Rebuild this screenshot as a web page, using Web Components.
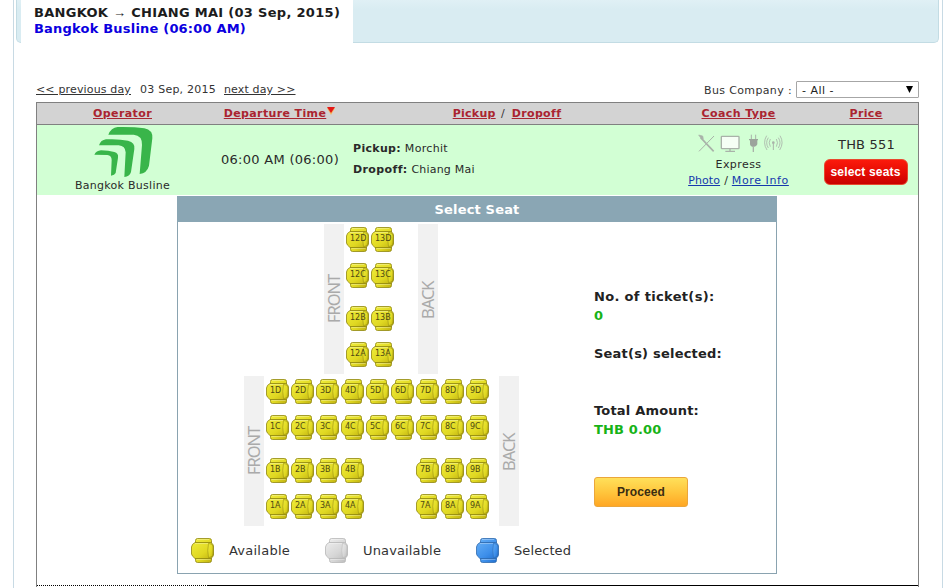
<!DOCTYPE html>
<html lang="en">
<head>
<meta charset="utf-8">
<title>Select Seat</title>
<style>
html,body{margin:0;background:#fff;overflow:hidden}
body{width:948px;height:588px;font:11px/14px "DejaVu Sans",sans-serif;color:#2a2a2a}
</style>
</head>
<body>
<booking-page></booking-page>
<script>
const define = (name, html, setup) => customElements.define(name, class extends HTMLElement {
  connectedCallback() {
    if (this.shadowRoot) return;
    const root = this.attachShadow({ mode: 'open' });
    root.innerHTML = typeof html === 'function' ? html(this) : html;
    if (setup) setup(this, root);
  }
});

// Text tracked to an exact advance width
const ctx = document.createElement('canvas').getContext('2d');
define('fit-text', '<style>:host{display:inline-block;white-space:pre}</style><slot></slot>', el => {
  const s = getComputedStyle(el);
  ctx.font = `${s.fontWeight} ${s.fontSize} ${s.fontFamily}`;
  const t = el.textContent, w = +el.getAttribute('w');
  el.style.letterSpacing = ((w - ctx.measureText(t).width) / t.length).toFixed(3) + 'px';
});

const tones = {
  available: ['#efec3a', '#e0d822', '#bfb110', '#8f860f'],
  unavailable: ['#ececec', '#d6d6d6', '#bdbdbd', '#b8b8b8'],
  selected: ['#62acf5', '#3d8fea', '#216fce', '#2f69ad']
};
define('bus-seat', el => {
  const [a, b, c, d] = tones[el.getAttribute('state') || 'available'];
  return `<style>
  :host{display:block;position:relative;width:24px;height:26px}
  svg{display:block}
  span{position:absolute;left:4px;top:7px;font:8px/9px "DejaVu Sans",sans-serif;color:#4d4913;white-space:nowrap}
  </style>
  <svg width="23" height="25" viewBox="0 0 23 25">
  <defs><linearGradient id="g" x1="0" y1="0" x2="1" y2="1"><stop offset="0" stop-color="${a}"/><stop offset=".6" stop-color="${b}"/><stop offset="1" stop-color="${c}"/></linearGradient></defs>
  <g stroke="${d}" stroke-width=".8" fill="url(#g)">
  <path d="M4.500 5V2.500q0-2 2-2h12q2 0 2 2V5zM4.500 20v2.500q0 2 2 2h12q2 0 2-2V20z"/>
  <path d="M4 4.500h15.500q2.800 1 3 3.500v9q-.5 2.500-3 3.500H4Q.8 18 .5 16V9Q.8 6 4 4.500z"/>
  <path d="M17.500 5.500q-1.500 7 0 14l2.500-.5q2-1 2-3.500v-6.500q0-2.500-2-3z" stroke-opacity=".65"/>
  </g><path d="M4 5.500h13M6 1.500h12M5.500 21.500h14" stroke="#fff" stroke-opacity=".3"/></svg>
  <span><slot></slot></span>`;
});

define('deck-edge', `<style>
:host{display:flex;width:20px;height:150px;box-sizing:border-box;padding-bottom:2px;background:#f1f1f1;align-items:center;justify-content:center;
writing-mode:vertical-rl;transform:rotate(180deg);font:16.5px/20px "Noto Sans",sans-serif;color:#aaa}
</style><slot></slot>`);

// A deck is a grid of seats between its front and back edges
define('seat-deck', el => {
  const cols = el.getAttribute('cols').split(' ').map(Number);
  const skip = (el.getAttribute('aisle') || '').split(' ').map(Number);
  let seats = '';
  ['D', 'C', 'B', 'A'].forEach((r, i) => cols.forEach((n, j) => {
    if (i > 1 && skip.includes(n)) return;
    seats += `<bus-seat style="grid-area:${i + 1}/${j + 1}">${n}${r}</bus-seat>`;
  }));
  return `<style>:host{display:flex;height:150px}
  .s{display:grid;grid-template-columns:repeat(${cols.length},25px);grid-template-rows:36px 43px 36px 26px;padding:3px 0 0 2px;box-sizing:border-box;width:${el.getAttribute('body')}px}
  </style><deck-edge style="padding-bottom:0;padding-top:0"><fit-text w="48">FRONT</fit-text></deck-edge><div class="s">${seats}</div><deck-edge><fit-text w="37.5">BACK</fit-text></deck-edge>`;
});

define('operator-logo', `<style>:host{display:block;width:60px;height:52px}svg{display:block}</style>
<svg width="60" height="52" viewBox="188 153 180 156" fill="#39b54a">
<path d="M234 179Q242 158 262 156Q310 155 342 160Q368 165 366 190L356 272Q350 294 328 297L335 210Q336 181 310 179Z"/>
<path d="M206 211Q211 195 227 193Q265 191 293 197Q315 202 312 222L302 291Q298 304 282 306L286 232Q285 213 265 211Z"/>
<path d="M192 239Q198 227 212 226Q235 226 252 231Q265 234 263 248L256 294Q253 301 242 302L244 255Q244 242 231 240Z"/>
</svg>`);

define('coach-amenities', `<style>:host{display:block;width:88px;height:20px}svg{display:block}</style>
<svg width="88" height="20" viewBox="163 174 264 60" fill="none" stroke="#a9b2a9" stroke-width="4">
<path d="M180 188L219 229" stroke-width="5"/><path d="M220 183L175 229" stroke-width="3"/><path d="M174 180l7 10l7 1l-2-8z" fill="#a9b2a9" stroke-width="2"/>
<rect x="242" y="184" width="53" height="37" rx="2" fill="#f5fff5" stroke-width="4"/><path d="M254 229h29M268 221v7" stroke-width="4"/>
<path d="M332 179v13M345 179v13" stroke-width="3"/><path d="M325 192h27v4h-2v12q-3 8-11 8q-9 0-11-8v-12h-3z" fill="#9ca49c" stroke="none"/><path d="M338 213v18"/>
<circle cx="398" cy="203" r="4" fill="#a9b2a9" stroke="none"/><path d="M398 207v18" stroke-width="3"/>
<path d="M389 192q-7 11 0 23M407 192q7 11 0 23M383 188q-10 15 0 31M413 188q10 15 0 31M378 182q-13 21 1 43M418 182q13 21-1 43" stroke-width="2.500"/>
</svg>`);

define('route-header', `<style>
:host{display:flex;height:43px;margin:0 3px 0 2px;box-sizing:border-box;border:1px solid #c3dce4;border-top:0;border-radius:0 0 5px 5px;background:linear-gradient(#e0f0f5,#d9ecf2 9px);padding-left:4px}
.tab{width:332px;height:43px;box-sizing:border-box;background:#fff;padding:5px 0 0 13px;font:bold 13px/16px "DejaVu Sans",sans-serif;color:#1c1c1c}
.tab fit-text{display:block}.b{color:#0b00df}.a{font-family:"Liberation Sans",sans-serif;font-weight:normal;line-height:1}
</style><div class="tab"><fit-text w="304">BANGKOK <span class="a">→</span> CHIANG MAI (03 Sep, 2015)</fit-text><fit-text class="b" w="212">Bangkok Busline (06:00 AM)</fit-text></div>`);

define('day-nav', `<style>
:host{display:flex;height:21px;padding:38px 23px 0 22px;color:#333}
.u{text-decoration:underline;text-underline-offset:1px}
fit-text{margin-top:2px}.d{margin-left:9px}.n{margin-left:8px}.c{margin:3px 4px 0 auto}
.sel{display:flex;justify-content:space-between;box-sizing:border-box;width:123px;height:17px;border:1px solid #a6a6a6;border-radius:1px;padding:1px 5px 0 5px;color:#222}
.sel fit-text{margin:1px 0 0}svg{margin-top:3px}
</style><fit-text class="u" w="95">&lt;&lt; previous day</fit-text><fit-text class="d" w="76">03 Sep, 2015</fit-text><fit-text class="n u" w="71.5">next day &gt;&gt;</fit-text>
<fit-text class="c" w="88">Bus Company :</fit-text><div class="sel"><fit-text w="32">- All -</fit-text><svg width="7" height="7"><path d="M0 0h7L3.500 7z" fill="#000"/></svg></div>`);

define('trip-table', `<style>
:host{display:block;margin:0 23px 0 22px;border:1px solid #808080;border-bottom:0;height:485px;box-sizing:border-box}
.h,.r{display:grid;grid-template-columns:170px 144px 312px 150px 105px}
.h{height:21px;background:#d3d3d3;border-bottom:1px solid #808080;font-weight:bold;color:#aa2430;text-align:center}
.h>div{padding:4px 0 0 1px}
u{text-decoration:none}u fit-text{text-decoration:underline 1px;text-underline-offset:1px}
.h .dep{display:flex;justify-content:center;gap:1px}
.h i{font-weight:normal;font-style:normal;color:#333}
.r{height:70px;background:#d2ffd4}
.r>div{display:flex;flex-direction:column;align-items:center}
.r .op{padding:1px 0 0 1px}.op fit-text{line-height:14px;margin-top:1px}
.r .time{font-size:13px;line-height:16px;padding:27px 0 0 2px}
.r>.pick{align-items:flex-start;padding:13px 0 0 2px;line-height:21px}
.r .coach{padding:8px 0 0 1px}.coach .e{margin-top:5px;line-height:14px}.coach .l{display:flex;gap:4px;margin-top:2px}
.l u{color:#1539ad}
.price{font-size:13px;line-height:16px;padding-top:12px}.price>fit-text{margin-left:2px}
.buy{width:84px;height:26px;box-sizing:border-box;border:1px solid #e8482e;border-radius:6px;background:linear-gradient(#fb1a0c,#e40b03 55%,#c90000);margin-top:6px;text-align:center;font:bold 12px/24px "Liberation Sans",sans-serif;color:#fff}
.panel{margin:1px auto 0 140px}
.line{height:1px;margin-top:11px;display:flex}.line b{width:171px;background:repeating-linear-gradient(90deg,#000 0 1px,#fff 1px 2px)}.line i{flex:1;background:#000}
</style>
<div class="h"><div><u><fit-text w="59">Operator</fit-text></u></div>
<div class="dep"><u><fit-text w="102.5">Departure Time</fit-text></u><svg width="8" height="8"><path d="M0 1h8L4 8z" fill="#f7b65b"/><path d="M0 0h8L4 6z" fill="#e31818"/></svg></div>
<div style="padding-left:0"><u><fit-text w="43">Pickup</fit-text></u><i><fit-text w="16"> / </fit-text></i><u><fit-text w="49">Dropoff</fit-text></u></div>
<div><u><fit-text w="74">Coach Type</fit-text></u></div><div><u><fit-text w="33">Price</fit-text></u></div></div>
<div class="r"><div class="op"><operator-logo></operator-logo><fit-text w="95">Bangkok Busline</fit-text></div>
<div class="time"><fit-text w="118">06:00 AM (06:00)</fit-text></div>
<div class="pick"><div><b><fit-text w="48">Pickup:</fit-text></b><fit-text w="47"> Morchit</fit-text></div><div><b><fit-text w="54">Dropoff:</fit-text></b><fit-text w="67"> Chiang Mai</fit-text></div></div>
<div class="coach"><coach-amenities></coach-amenities><fit-text class="e" w="46">Express</fit-text><div class="l"><u><fit-text w="32">Photo</fit-text></u><span>/</span><u><fit-text w="57">More Info</fit-text></u></div></div>
<div class="price"><fit-text w="57">THB 551</fit-text><div class="buy"><fit-text w="70">select seats</fit-text></div></div></div>
<seat-panel class="panel"></seat-panel>
<div class="line"><b></b><i></i></div>`);

define('order-summary', `<style>
:host{display:block;padding:65px 0 0 0;font:bold 13px/19px "DejaVu Sans",sans-serif;color:#222}
div{height:57px}fit-text{display:block}.g{color:#17b317}
.go{width:94px;height:30px;box-sizing:border-box;margin-top:19px;border:1px solid #eba63b;border-radius:3px;background:linear-gradient(#ffe05a,#ffc63d 50%,#ffa724);text-align:center;font:bold 12px/28px "Liberation Sans",sans-serif;color:#3a2c12}
.go fit-text{display:inline-block}
</style>
<div><fit-text w="120.5">No. of ticket(s):</fit-text><fit-text class="g" w="9.5">0</fit-text></div>
<div><fit-text w="128">Seat(s) selected:</fit-text></div>
<div><fit-text w="105">Total Amount:</fit-text><fit-text class="g" w="67.5">THB 0.00</fit-text></div>
<div class="go"><fit-text w="48">Proceed</fit-text></div>`);

define('seat-panel', `<style>
:host{display:block;width:600px;height:378px;box-sizing:border-box;border:1px solid #8aa3b0;border-top:0}
.t{height:26px;margin:0 -1px;background:#8aa6b4;text-align:center;color:#fff;font:bold 13px/27px "DejaVu Sans",sans-serif}
.m{display:flex;height:306px}
.decks{display:flex;flex-direction:column;width:416px;gap:2px;padding-top:2px}
.legend{display:flex;align-items:center;height:26px;margin:10px 0 0 13px;font-size:13px;line-height:16px;color:#333}
.legend fit-text{margin-left:14px}
</style>
<div class="t"><fit-text w="85">Select Seat</fit-text></div>
<div class="m"><div class="decks">
<seat-deck style="margin-left:146px" cols="12 13" body="74"></seat-deck>
<seat-deck style="margin-left:66px" cols="1 2 3 4 5 6 7 8 9" aisle="5 6" body="235"></seat-deck>
</div><order-summary></order-summary></div>
<div class="legend"><bus-seat></bus-seat><fit-text w="61">Available</fit-text>
<bus-seat state="unavailable" style="margin-left:35px"></bus-seat><fit-text w="78">Unavailable</fit-text>
<bus-seat state="selected" style="margin-left:35px"></bus-seat><fit-text w="57">Selected</fit-text></div>`);

define('booking-page', `<style>
:host{display:block;width:928px;height:588px;margin-left:13px;border:solid #c8dae4;border-width:0 1px}
</style><route-header></route-header><day-nav></day-nav><trip-table></trip-table>`);
</script>
</body>
</html>
